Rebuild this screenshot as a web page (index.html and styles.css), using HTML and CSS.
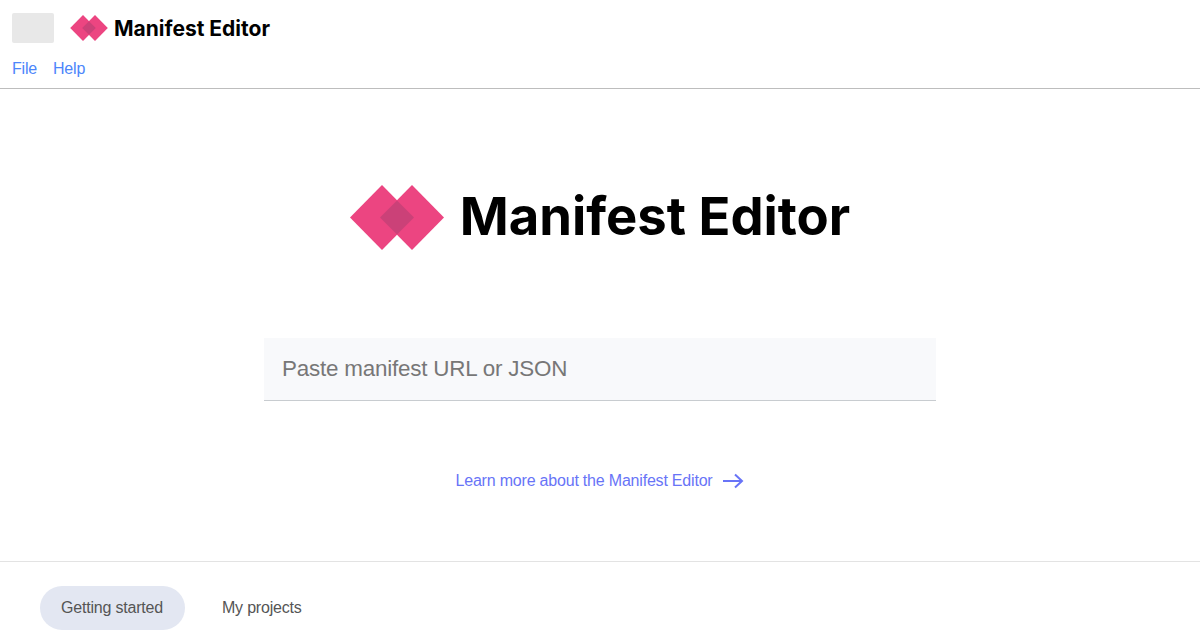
FILE: index.html
```html
<!DOCTYPE html>
<html lang="en">
<head>
  <meta charset="UTF-8">
  <meta name="viewport" content="width=device-width, initial-scale=1.0">
  <title>Manifest Editor</title>
  <link rel="stylesheet" href="styles.css">
</head>
<body>
  <header class="topbar">
    <div class="topbar-row">
      <div class="slot"></div>
      <div class="brand">
        <svg class="brand-mark" viewBox="0 0 94 65" aria-hidden="true">
          <use href="#mark"></use>
        </svg>
        <span class="brand-name">Manifest Editor</span>
      </div>
    </div>
    <nav class="menu">
      <a href="#">File</a>
      <a href="#">Help</a>
    </nav>
  </header>

  <main class="hero">
    <div class="hero-logo">
      <svg class="hero-mark" viewBox="0 0 94 65" aria-hidden="true">
        <g id="mark">
          <polygon points="0,32.5 32,0 64,32.5 32,65" fill="#ec4581"/>
          <polygon points="30,32.5 62,0 94,32.5 62,65" fill="#ec4581"/>
          <polygon points="30,32.5 47,15.5 64,32.5 47,49.5" fill="#cb4178"/>
        </g>
      </svg>
      <span class="hero-name">Manifest Editor</span>
    </div>

    <input class="manifest-input" type="text" placeholder="Paste manifest URL or JSON">

    <a class="learn-link" href="#">
      Learn more about the Manifest Editor
      <svg class="arrow" viewBox="0 0 22 16" aria-hidden="true">
        <path d="M1 8H20M13 1.500L20 8L13 14.500" fill="none" stroke="currentColor" stroke-width="2"/>
      </svg>
    </a>
  </main>

  <footer class="tabs">
    <a class="tab active" href="#">Getting started</a>
    <a class="tab" href="#">My projects</a>
  </footer>
</body>
</html>
```

FILE: styles.css
```css
* {
  box-sizing: border-box;
  margin: 0;
  padding: 0;
}

html, body {
  height: 630px;
  overflow: hidden;
}

body {
  background-color: white;
  font-family: 'Liberation Sans', Arial, sans-serif;
  font-size: 16px;
  letter-spacing: -0.2px;
}

a {
  text-decoration: none;
}

.topbar {
  height: 89px;
  padding: 13px 12px 0;
  border-bottom: 1px solid #bdbdbd;
}

.topbar-row {
  display: flex;
  align-items: center;
  gap: 16px;
}

.slot {
  width: 42px;
  height: 30px;
  background-color: #e8e8e8;
  border-radius: 2px;
}

.brand {
  display: flex;
  align-items: center;
  gap: 6px;
}

.brand-mark {
  width: 38px;
  height: 26px;
}

.brand-name {
  font-family: Inter, sans-serif;
  font-size: 21px;
  font-weight: 700;
  letter-spacing: 0;
  color: black;
}

.menu {
  display: flex;
  gap: 16px;
  margin-top: 17px;
  line-height: 18px;
}

.menu a {
  color: #4c86fb;
}

.hero {
  height: 472px;
  display: flex;
  flex-direction: column;
  align-items: center;
  padding-top: 96px;
}

.hero-logo {
  display: flex;
  align-items: center;
  gap: 16px;
  height: 65px;
}

.hero-mark {
  width: 94px;
  height: 65px;
}

.hero-name {
  font-family: Inter, sans-serif;
  font-size: 52.6px;
  font-weight: 700;
  letter-spacing: 0;
  padding-bottom: 3px;
  color: black;
}

.manifest-input {
  display: block;
  width: 672px;
  height: 63px;
  margin-top: 88px;
  padding: 0 18px;
  background-color: #f8f9fb;
  border: none;
  border-bottom: 1px solid #c8ccd0;
  font-family: inherit;
  font-size: 22.4px;
  letter-spacing: -0.2px;
  outline: none;
}

.manifest-input::placeholder {
  color: #777;
  opacity: 1;
}

.learn-link {
  display: flex;
  align-items: center;
  gap: 10px;
  margin-top: 71px;
  line-height: 18px;
  color: #6874f7;
}

.arrow {
  width: 22px;
  height: 16px;
}

.tabs {
  display: flex;
  gap: 16px;
  padding: 24px 40px 0;
  border-top: 1px solid #e3e3e3;
}

.tab {
  padding: 13px 22px 13px 21px;
  height: 44px;
  line-height: 18px;
  border-radius: 22px;
  color: #555;
}

.tab.active {
  background-color: #e3e7f2;
}
```
